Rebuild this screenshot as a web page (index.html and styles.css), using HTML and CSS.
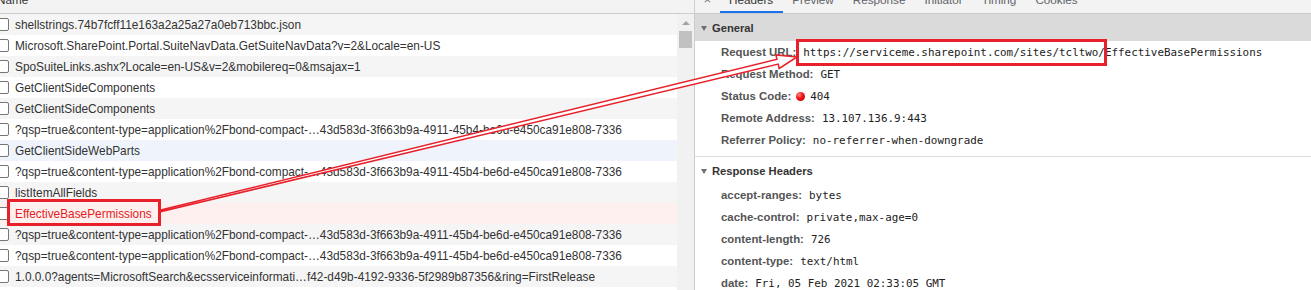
FILE: index.html
```html
<!DOCTYPE html>
<html>
<head>
<meta charset="utf-8">
<link rel="stylesheet" href="styles.css">
</head>
<body>
<div class="app">
  <div class="left">
    <div class="list-head"><span class="col-name">Name</span></div>
    <div class="list-body">
      <div class="rows">
        <div class="row odd"><span class="cb"></span><span class="txt">shellstrings.74b7fcff11e163a2a25a27a0eb713bbc.json</span></div>
        <div class="row"><span class="cb"></span><span class="txt">Microsoft.SharePoint.Portal.SuiteNavData.GetSuiteNavData?v=2&amp;Locale=en-US</span></div>
        <div class="row odd"><span class="cb"></span><span class="txt">SpoSuiteLinks.ashx?Locale=en-US&amp;v=2&amp;mobilereq=0&amp;msajax=1</span></div>
        <div class="row"><span class="cb"></span><span class="txt">GetClientSideComponents</span></div>
        <div class="row odd"><span class="cb"></span><span class="txt">GetClientSideComponents</span></div>
        <div class="row"><span class="cb"></span><span class="txt">?qsp=true&amp;content-type=application%2Fbond-compact-…43d583d-3f663b9a-4911-45b4-be6d-e450ca91e808-7336</span></div>
        <div class="row hover"><span class="cb"></span><span class="txt">GetClientSideWebParts</span></div>
        <div class="row"><span class="cb"></span><span class="txt">?qsp=true&amp;content-type=application%2Fbond-compact-…43d583d-3f663b9a-4911-45b4-be6d-e450ca91e808-7336</span></div>
        <div class="row odd"><span class="cb"></span><span class="txt">listItemAllFields</span></div>
        <div class="row error"><span class="cb"></span><span class="txt">EffectiveBasePermissions</span></div>
        <div class="row odd"><span class="cb"></span><span class="txt">?qsp=true&amp;content-type=application%2Fbond-compact-…43d583d-3f663b9a-4911-45b4-be6d-e450ca91e808-7336</span></div>
        <div class="row"><span class="cb"></span><span class="txt">?qsp=true&amp;content-type=application%2Fbond-compact-…43d583d-3f663b9a-4911-45b4-be6d-e450ca91e808-7336</span></div>
        <div class="row odd"><span class="cb"></span><span class="txt">1.0.0.0?agents=MicrosoftSearch&amp;ecsserviceinformati…f42-d49b-4192-9336-5f2989b87356&amp;ring=FirstRelease</span></div>
      </div>
      <div class="scrollbar">
        <div class="sb-up"></div>
        <div class="sb-thumb"></div>
      </div>
    </div>
  </div>
  <div class="right">
    <div class="tabs">
      <div class="tab close"><span>×</span></div>
      <div class="tab active"><span>Headers</span></div>
      <div class="tab"><span>Preview</span></div>
      <div class="tab"><span>Response</span></div>
      <div class="tab"><span>Initiator</span></div>
      <div class="tab"><span>Timing</span></div>
      <div class="tab"><span>Cookies</span></div>
    </div>
    <div class="sec-head general"><span class="tri"></span><span class="sec-title">General</span></div>
    <div class="kvs general-kvs">
      <div class="kv"><span class="k">Request URL:</span><span class="v">https://serviceme.sharepoint.com/sites/tcltwo/EffectiveBasePermissions</span></div>
      <div class="kv"><span class="k">Request Method:</span><span class="v">GET</span></div>
      <div class="kv"><span class="k">Status Code:</span><span class="dot"></span><span class="v">404</span></div>
      <div class="kv"><span class="k">Remote Address:</span><span class="v">13.107.136.9:443</span></div>
      <div class="kv"><span class="k">Referrer Policy:</span><span class="v">no-referrer-when-downgrade</span></div>
    </div>
    <div class="sec-head resp"><span class="tri"></span><span class="sec-title">Response Headers</span></div>
    <div class="kvs">
      <div class="kv"><span class="k">accept-ranges:</span><span class="v">bytes</span></div>
      <div class="kv"><span class="k">cache-control:</span><span class="v">private,max-age=0</span></div>
      <div class="kv"><span class="k">content-length:</span><span class="v">726</span></div>
      <div class="kv"><span class="k">content-type:</span><span class="v">text/html</span></div>
      <div class="kv"><span class="k">date:</span><span class="v">Fri, 05 Feb 2021 02:33:05 GMT</span></div>
    </div>
  </div>
</div>
<svg class="annot" width="1311" height="290" viewBox="0 0 1311 290">
  <rect x="8.5" y="200.5" width="151" height="24" fill="none" stroke="#e8202a" stroke-width="3"/>
  <rect x="797.5" y="40.5" width="308" height="24" fill="none" stroke="#e8202a" stroke-width="3"/>
  <polygon points="159.8,210.2 776.97,59.27 775.9,54.9 797,57 779.2,68.5 778.15,64.13 160.19,211.78" fill="#ffffff" stroke="#e8202a" stroke-width="1.5" stroke-linejoin="miter"/>
</svg>
</body>
</html>
```

FILE: styles.css
```css
html, body {
  margin: 0;
  padding: 0;
  width: 1311px;
  height: 290px;
  overflow: hidden;
  background: #ffffff;
}
body {
  position: relative;
  font-family: "Liberation Sans", Arial, sans-serif;
  color: #333333;
}
.app {
  display: flex;
  width: 1311px;
  height: 290px;
}
.left {
  width: 694px;
  flex: none;
  display: flex;
  flex-direction: column;
  overflow: hidden;
}
.list-head {
  height: 13px;
  background: #f3f3f3;
  border-bottom: 1px solid #cdcdcd;
  overflow: hidden;
  flex: none;
}
.col-name {
  display: block;
  font-size: 11.7px;
  line-height: 12px;
  margin-top: -6px;
  margin-left: -3px;
  color: #333333;
}
.list-body {
  display: flex;
  flex: 1;
  min-height: 0;
}
.rows {
  width: 677px;
  flex: none;
  overflow: hidden;
}
.row {
  height: 21px;
  display: flex;
  align-items: center;
  background: #ffffff;
  white-space: nowrap;
  font-size: 11.85px;
  color: #333333;
}
.row.odd { background: #f5f5f5; }
.row.hover { background: #eef3fc; }
.row.error { background: #fff0f0; color: #e51c23; }
.cb {
  width: 11px;
  height: 11px;
  flex: none;
  margin-left: -4px;
  border: 1px solid #767676;
  border-radius: 2px;
  background: #ffffff;
}
.txt {
  margin-left: 6px;
}
.scrollbar {
  width: 17px;
  flex: none;
  background: #f1f1f1;
  display: flex;
  flex-direction: column;
  align-items: center;
}
.sb-up {
  width: 0;
  height: 0;
  margin-top: 7px;
  border-left: 4px solid transparent;
  border-right: 4px solid transparent;
  border-bottom: 4px solid #a3a3a3;
}
.sb-thumb {
  width: 13px;
  height: 17px;
  margin-top: 6px;
  margin-left: -1px;
  background: #c1c1c1;
}
.right {
  flex: 1;
  border-left: 1px solid #cdcdcd;
  display: flex;
  flex-direction: column;
  overflow: hidden;
}
.tabs {
  height: 13px;
  flex: none;
  display: flex;
  background: #f3f3f3;
  border-bottom: 1px solid #cacdd1;
  overflow: hidden;
}
.tab {
  height: 13px;
  box-sizing: border-box;
  padding: 0 9.5px;
  font-size: 11.7px;
  color: #5f6368;
}
.tab span {
  display: block;
  line-height: 12px;
  margin-top: -6px;
}
.tab.close {
  width: 24.5px;
  padding: 0;
  text-align: center;
  font-size: 13px;
  color: #6e6e6e;
}
.tab.active {
  color: #333333;
  border-bottom: 2px solid #1a73e8;
}
.sec-head {
  height: 27px;
  flex: none;
  display: flex;
  align-items: center;
}
.sec-head.general { background: #dadada; }
.sec-head.resp {
  border-top: 1px solid #dddddd;
  margin-top: 5px;
}
.tri {
  width: 0;
  height: 0;
  margin-left: 6px;
  margin-top: 1px;
  border-left: 3.5px solid transparent;
  border-right: 3.5px solid transparent;
  border-top: 5px solid #6e6e6e;
}
.sec-title {
  margin-left: 5px;
  font-size: 11.2px;
  font-weight: bold;
  color: #333333;
}
.kvs {
  flex: none;
}
.kv {
  height: 22px;
  display: flex;
  align-items: center;
  padding-left: 26px;
  white-space: nowrap;
}
.k {
  font-size: 11.4px;
  font-weight: bold;
  color: #555555;
}
.v {
  margin-left: 7px;
  font-family: "DejaVu Sans Mono", "Liberation Mono", monospace;
  font-size: 10.9px;
  color: #222222;
}
.dot {
  width: 9px;
  height: 9px;
  flex: none;
  margin-left: 5px;
  margin-right: -2px;
  border-radius: 50%;
  background: radial-gradient(circle at 35% 30%, #ff8a8a 0%, #f01010 45%, #b00000 100%);
}
.annot {
  position: absolute;
  left: 0;
  top: 0;
  pointer-events: none;
}
```
